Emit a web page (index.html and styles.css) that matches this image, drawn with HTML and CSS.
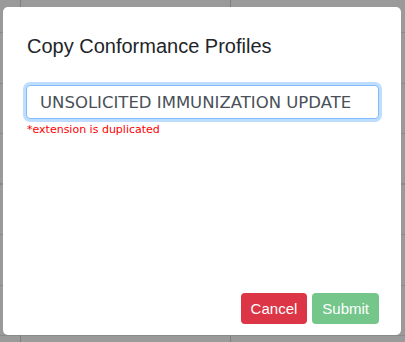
FILE: index.html
```
<!DOCTYPE html>
<html>
	<head>
		<meta charset="utf-8" />
		<title>Copy Conformance Profiles</title>
		<link rel="stylesheet" href="styles.css">
	</head>
	<body>
		<div class="backdrop"></div>
		<div class="modal">
			<h2 class="title">Copy Conformance Profiles</h2>
			<div class="field">
				<input class="ipt-txt" value="UNSOLICITED IMMUNIZATION UPDATE" />
				<p class="error">*extension is duplicated</p>
			</div>
			<div class="footer">
				<a class="btn btn-cancel">Cancel</a>
				<a class="btn btn-submit">Submit</a>
			</div>
		</div>
	</body>
</html>
```
FILE: styles.css
```
*{
	margin: 0;
	padding: 0;
	box-sizing: border-box;
}
a{
	text-decoration: none;
	color: inherit;
}
body{
	width: 405px;
	height: 342px;
	overflow: hidden;
	font-family: "Liberation Sans", Arial, sans-serif;
}
/*背景*/
.backdrop{
	width: 405px;
	height: 342px;
	background-color: #9a9a9a;
	background-image:
		linear-gradient(to right, transparent 20px, #7e7e7e 20px, #7e7e7e 21px, transparent 21px),
		linear-gradient(to right, transparent 230px, #7e7e7e 230px, #7e7e7e 231px, transparent 231px),
		repeating-linear-gradient(to bottom, transparent 0, transparent 32px, #8a8a8a 32px, #8a8a8a 33px, transparent 33px, transparent 50.5px);
}
/*弹窗*/
.modal{
	position: absolute;
	top: 7px;
	left: 3px;
	width: 398px;
	height: 328px;
	background-color: white;
	border-radius: 5px;
	display: flex;
	flex-direction: column;
	padding: 27px 22px 11px 23px;
}
.title{
	margin-left: 1px;
	font-size: 20px;
	font-weight: normal;
	line-height: 1.2;
	color: #212529;
}
.field{
	margin-top: 27px;
}
.ipt-txt{
	display: block;
	width: 353px;
	height: 34px;
	padding: 0 13px;
	font-family: "DejaVu Sans", Verdana, sans-serif;
	font-size: 16.5px;
	color: #495057;
	border: 1px solid #80bdff;
	border-radius: 4px;
	box-shadow: 0 0 0 3px rgba(0, 123, 255, .25);
	outline: none;
}
.error{
	margin-top: 4px;
	margin-left: 1px;
	font-family: "DejaVu Sans", Verdana, sans-serif;
	font-size: 11px;
	color: #ff0000;
}
.footer{
	margin-top: auto;
	display: flex;
	justify-content: flex-end;
	gap: 5px;
}
.btn{
	height: 31px;
	padding: 0 10px;
	font-size: 15px;
	line-height: 31px;
	color: white;
	border-radius: 4px;
	cursor: pointer;
}
.btn-cancel{
	background-color: #dc3545;
}
.btn-submit{
	background-color: #74c68b;
}
```
